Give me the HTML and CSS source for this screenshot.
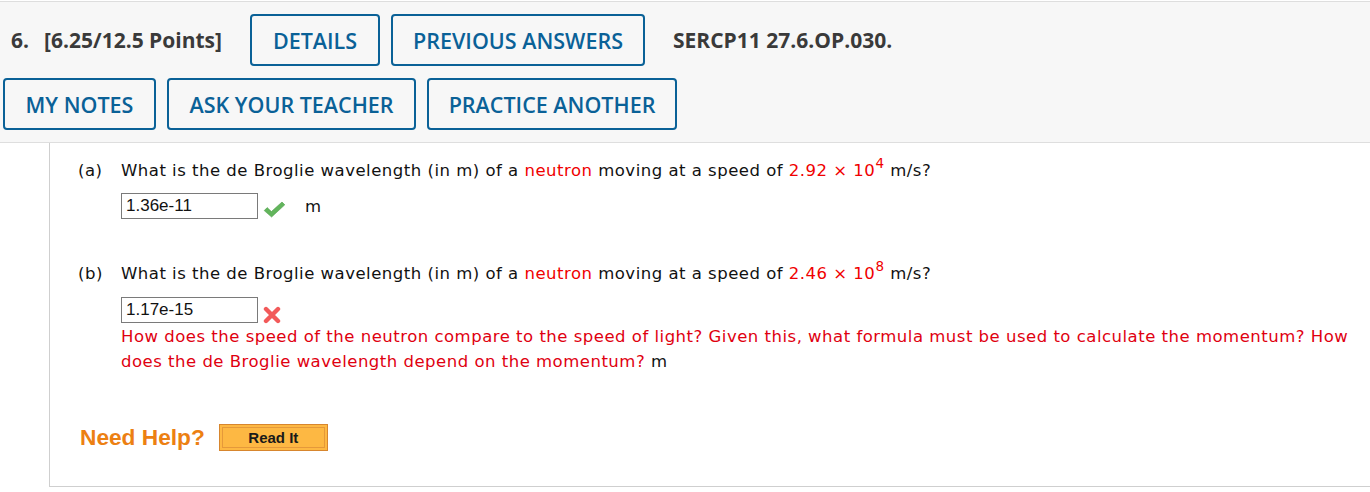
FILE: index.html
```html
<!DOCTYPE html>
<html>
<head>
<meta charset="utf-8">
<link rel="stylesheet" href="styles.css">
</head>
<body>
<div class="page">
  <div class="qhead">
    <div class="row">
      <span class="title"><span class="num">6.</span>[6.25/12.5 Points]</span>
      <span class="btn b-details">DETAILS</span>
      <span class="btn b-prev">PREVIOUS ANSWERS</span>
      <span class="code">SERCP11 27.6.OP.030.</span>
    </div>
    <div class="row">
      <span class="btn b-notes">MY NOTES</span>
      <span class="btn b-ask">ASK YOUR TEACHER</span>
      <span class="btn b-practice">PRACTICE ANOTHER</span>
    </div>
  </div>
  <div class="qbody">
    <div class="part">
      <div class="qline"><span class="label">(a)</span><span class="qtext">What is the de Broglie wavelength (in m) of a <span class="red">neutron</span> moving at a speed of <span class="red">2.92 × 10<sup>4</sup></span> m/s?</span></div>
      <div class="answer">
        <span class="inp">1.36e-11</span>
        <svg class="icon" width="23" height="17" viewBox="0 0 23 17"><path d="M1.2 9.6 L4.2 6.6 L8.4 10.6 L19 1 L21.8 3.8 L8.6 16 Z" fill="#62b55c" stroke="#519f4b" stroke-width="0.6" stroke-linejoin="round"/></svg>
        <span class="unit">m</span>
      </div>
    </div>
    <div class="part partb">
      <div class="qline"><span class="label">(b)</span><span class="qtext">What is the de Broglie wavelength (in m) of a <span class="red">neutron</span> moving at a speed of <span class="red">2.46 × 10<sup>8</sup></span> m/s?</span></div>
      <div class="answer">
        <span class="inp">1.17e-15</span>
        <svg class="icon xicon" width="18" height="18" viewBox="0 0 18 18"><path d="M3 3 L15 15 M15 3 L3 15" stroke="#f25a5a" stroke-width="4.4" stroke-linecap="round"/></svg>
      </div>
      <div class="hint">How does the speed of the neutron compare to the speed of light? Given this, what formula must be used to calculate the momentum? How does the de Broglie wavelength depend on the momentum? <span class="blk">m</span></div>
    </div>
    <div class="help">
      <span class="needhelp">Need Help?</span>
      <span class="readit">Read It</span>
    </div>
  </div>
</div>
</body>
</html>
```

FILE: styles.css
```css
html, body {
  margin: 0;
  padding: 0;
  background: #fff;
  overflow: hidden;
}
.page {
  width: 1370px;
  padding-top: 1px;
}
.qhead {
  background: #f7f7f7;
  border-top: 1px solid #dedede;
  border-bottom: 1px solid #dedede;
  padding: 12px 0 12px 3px;
  font-family: "Open Sans", sans-serif;
}
.row {
  display: flex;
  align-items: center;
  gap: 11px;
  height: 52px;
}
.row + .row {
  margin-top: 12px;
}
.title {
  margin-left: 8px;
  margin-right: 17px;
  font-weight: 700;
  font-size: 21px;
  color: #3a3a3a;
}
.num {
  margin-right: 15px;
}
.code {
  margin-left: 17px;
  font-weight: 700;
  font-size: 21px;
  color: #3a3a3a;
}
.btn {
  box-sizing: border-box;
  height: 52px;
  display: flex;
  align-items: center;
  justify-content: center;
  border: 2px solid #0a6197;
  border-radius: 4px;
  color: #0a6197;
  font-weight: 600;
  font-size: 21.5px;
}
.b-details { width: 130px; }
.b-prev { width: 254px; }
.b-notes { width: 153px; }
.b-ask { width: 249px; }
.b-practice { width: 250px; }

.qbody {
  box-sizing: border-box;
  margin-left: 49px;
  border-left: 1px solid #cfcfcf;
  border-bottom: 1px solid #cfcfcf;
  height: 344px;
  padding: 16px 14px 0 28px;
  font-family: "DejaVu Sans", sans-serif;
  font-size: 16.5px;
  letter-spacing: 0.5px;
  color: #111;
}
.qline {
  display: flex;
  line-height: 24px;
}
.label {
  width: 43px;
  flex: none;
}
.red {
  color: #f00000;
}
sup {
  font-size: 13.5px;
  line-height: 0;
  position: relative;
  top: -2px;
}
.answer {
  display: flex;
  align-items: center;
  margin-top: 10px;
  margin-left: 43px;
  height: 26px;
  letter-spacing: 0;
}
.inp {
  box-sizing: border-box;
  width: 137px;
  height: 26px;
  border: 1px solid #7a7a7a;
  background: #fff;
  font-family: "Liberation Sans", Arial, sans-serif;
  font-size: 17px;
  line-height: 24px;
  padding-left: 4px;
  color: #111;
}
.icon {
  margin-left: 5px;
  margin-top: 6px;
}
.xicon {
  margin-left: 5px;
  margin-top: 9px;
}
.unit {
  margin-left: 19px;
  font-family: "DejaVu Sans", sans-serif;
}
.partb {
  margin-top: 43px;
}
.partb .answer {
  margin-top: 11px;
}
.hint {
  margin-left: 43px;
  color: #e00010;
  line-height: 25px;
  margin-top: 1px;
}
.blk {
  color: #111;
}
.help {
  display: flex;
  align-items: center;
  margin-left: 2px;
  margin-top: 50px;
  gap: 14px;
  letter-spacing: 0;
}
.needhelp {
  font-family: "Liberation Sans", Arial, sans-serif;
  font-weight: 700;
  font-size: 22.7px;
  color: #ec8012;
}
.readit {
  box-sizing: border-box;
  width: 109px;
  height: 27px;
  display: flex;
  align-items: center;
  justify-content: center;
  background: #fdb843;
  border: 1px solid #d7862e;
  box-shadow: inset 0 0 0 2px #fdb843, inset 0 0 0 3px #e5993a;
  font-family: "Liberation Sans", Arial, sans-serif;
  font-weight: 700;
  font-size: 15px;
  color: #1a1a1a;
}
```
